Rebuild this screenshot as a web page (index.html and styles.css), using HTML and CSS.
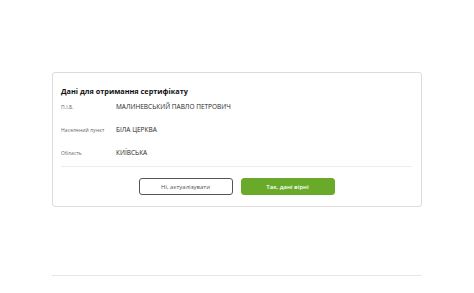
FILE: index.html
```html
<!DOCTYPE html>
<html lang="uk">
<head>
<meta charset="utf-8">
<link rel="stylesheet" href="styles.css">
</head>
<body>
<div class="page">
  <section class="card">
    <h2 class="title">Дані для отримання сертифікату</h2>
    <div class="rows">
      <div class="row"><span class="label">П.І.Б.</span><span class="value">МАЛИНЕВСЬКИЙ ПАВЛО ПЕТРОВИЧ</span></div>
      <div class="row"><span class="label">Населений пункт</span><span class="value">БІЛА ЦЕРКВА</span></div>
      <div class="row"><span class="label">Область</span><span class="value">КИЇВСЬКА</span></div>
    </div>
    <div class="divider"></div>
    <div class="actions">
      <button class="btn btn-outline">Ні, актуалізувати</button>
      <button class="btn btn-primary">Так, дані вірні</button>
    </div>
  </section>
  <div class="footer-line"></div>
</div>
</body>
</html>
```
FILE: styles.css
```css
* { box-sizing: border-box; }
html, body { margin: 0; padding: 0; background: #fff; }
body { font-family: "Open Sans", "Noto Sans", sans-serif; color: #222; }
.page { width: 474px; padding: 72px 52px 0 52px; }
.card {
  width: 370px;
  height: 135px;
  border: 1px solid #dcdcdc;
  border-radius: 3px;
  padding: 13px 9px 0 8px;
}
.title {
  margin: 0;
  font-size: 7.3px;
  font-weight: 700;
  line-height: 10px;
  color: #111;
}
.rows { display: flex; flex-direction: column; gap: 12px; margin-top: 5px; }
.row { display: flex; align-items: center; height: 11px; }
.label { width: 55px; font-size: 5px; color: #666; letter-spacing: 0.1px; }
.value { font-size: 6.5px; color: #1e1e1e; }
.divider { height: 1px; background: #ececec; margin-top: 8px; }
.actions { display: flex; justify-content: center; gap: 8px; margin-top: 11px; }
.btn {
  width: 94px;
  height: 17px;
  border-radius: 3px;
  font-family: "Open Sans", "Noto Sans", sans-serif;
  font-size: 6px;
  padding: 0;
}
.btn-outline { background: #fff; border: 1px solid #555; color: #555; }
.btn-primary { background: #6aaa2a; border: 1px solid #6aaa2a; color: #fff; font-weight: 600; }
.footer-line { width: 370px; height: 1px; background: #e6e6e6; margin-top: 68px; }
```
